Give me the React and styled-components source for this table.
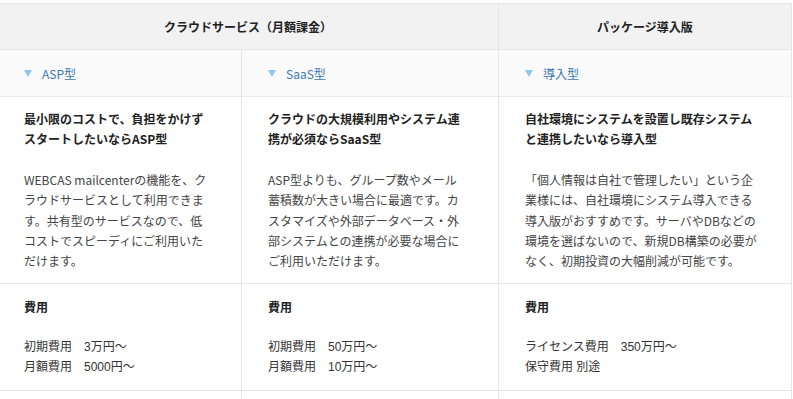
import styled, { createGlobalStyle } from 'styled-components';

const GlobalStyle = createGlobalStyle`
  html, body {
    margin: 0;
    padding: 0;
    background: #ffffff;
    overflow: hidden;
  }
  body {
    font-family: "Noto Sans CJK JP", "Noto Sans", sans-serif;
    color: #333333;
  }
`;

const Table = styled.div`
  display: grid;
  grid-template-columns: 244px 257px 294px;
  width: 795px;
  margin: 3px 0 0 -3px;
  border-top: 1px solid #e6e6e6;
`;

const Cell = styled.div`
  box-sizing: border-box;
  border-left: 1px solid #e6e6e6;
  border-bottom: 1px solid #e6e6e6;
  ${(p) => p.$last && 'border-right: 1px solid #e6e6e6;'}
`;

const HeadCell = styled(Cell)`
  grid-column: span ${(p) => p.$span || 1};
  height: 46px;
  display: flex;
  align-items: center;
  justify-content: center;
  background: #f2f2f2;
  font-size: 12px;
  font-weight: bold;
  color: #222222;
`;

const TypeCell = styled(Cell)`
  height: 47px;
  display: flex;
  align-items: center;
  gap: 10px;
  padding: 0 26px;
  background: #fafafa;
  border-bottom: 1px dotted #e2e2e2;
  font-size: 12px;
  color: #3a77b3;
`;

const Arrow = styled.span`
  width: 0;
  height: 0;
  border-left: 4px solid transparent;
  border-right: 4px solid transparent;
  border-top: 7px solid #8ec8ee;
  margin-top: 1px;
`;

const BodyCell = styled(Cell)`
  padding: 12px 26px 12px;
`;

const Title = styled.h3`
  margin: 0;
  font-size: 12px;
  font-weight: bold;
  line-height: 20px;
  color: #222222;
`;

const Text = styled.p`
  margin: 21px 0 0;
  font-size: 12px;
  line-height: 20.25px;
  color: #444444;
`;

const CostCell = styled(Cell)`
  padding: 13px 26px 13px;
`;

const CostList = styled.div`
  margin-top: 21px;
  font-family: "Liberation Sans", "Noto Sans CJK JP", sans-serif;
  font-size: 12px;
  line-height: 19.6px;
  color: #333333;
`;

const Empty = styled(Cell)`
  height: 8px;
  border-bottom: none;
`;

const plans = [
  {
    type: 'ASP型',
    title: ['最小限のコストで、負担をかけず', 'スタートしたいならASP型'],
    text: [
      'WEBCAS mailcenterの機能を、ク',
      'ラウドサービスとして利用できま',
      'す。共有型のサービスなので、低',
      'コストでスピーディにご利用いた',
      'だけます。',
    ],
    cost: ['初期費用　3万円～', '月額費用　5000円～'],
  },
  {
    type: 'SaaS型',
    title: ['クラウドの大規模利用やシステム連', '携が必須ならSaaS型'],
    text: [
      'ASP型よりも、グループ数やメール',
      '蓄積数が大きい場合に最適です。カ',
      'スタマイズや外部データベース・外',
      '部システムとの連携が必要な場合に',
      'ご利用いただけます。',
    ],
    cost: ['初期費用　50万円～', '月額費用　10万円～'],
  },
  {
    type: '導入型',
    title: ['自社環境にシステムを設置し既存システム', 'と連携したいなら導入型'],
    text: [
      '「個人情報は自社で管理したい」という企',
      '業様には、自社環境にシステム導入できる',
      '導入版がおすすめです。サーバやDBなどの',
      '環境を選ばないので、新規DB構築の必要が',
      'なく、初期投資の大幅削減が可能です。',
    ],
    cost: ['ライセンス費用　350万円～', '保守費用 別途'],
  },
];

const lines = (arr) =>
  arr.map((l, i) => (
    <span key={i}>
      {l}
      {i < arr.length - 1 && <br />}
    </span>
  ));

const App = () => {
  return (
    <>
      <GlobalStyle />
      <Table>
        <HeadCell $span={2}>クラウドサービス（月額課金）</HeadCell>
        <HeadCell $last>パッケージ導入版</HeadCell>

        {plans.map((p, i) => (
          <TypeCell key={'t' + i} $last={i === 2}>
            <Arrow />
            {p.type}
          </TypeCell>
        ))}

        {plans.map((p, i) => (
          <BodyCell key={'b' + i} $last={i === 2}>
            <Title>{lines(p.title)}</Title>
            <Text>{lines(p.text)}</Text>
          </BodyCell>
        ))}

        {plans.map((p, i) => (
          <CostCell key={'c' + i} $last={i === 2}>
            <Title>費用</Title>
            <CostList>{lines(p.cost)}</CostList>
          </CostCell>
        ))}

        {/* next row, only its top edge shows */}
        {plans.map((p, i) => (
          <Empty key={'e' + i} $last={i === 2} />
        ))}
      </Table>
    </>
  );
};

export default App;
